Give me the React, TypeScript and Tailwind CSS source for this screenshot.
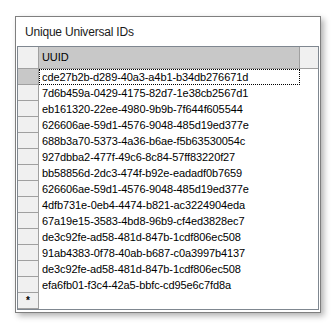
const uuids = [
  "cde27b2b-d289-40a3-a4b1-b34db276671d",
  "7d6b459a-0429-4175-82d7-1e38cb2567d1",
  "eb161320-22ee-4980-9b9b-7f644f605544",
  "626606ae-59d1-4576-9048-485d19ed377e",
  "688b3a70-5373-4a36-b6ae-f5b63530054c",
  "927dbba2-477f-49c6-8c84-57ff83220f27",
  "bb58856d-2dc3-474f-b92e-eadadf0b7659",
  "626606ae-59d1-4576-9048-485d19ed377e",
  "4dfb731e-0eb4-4474-b821-ac3224904eda",
  "67a19e15-3583-4bd8-96b9-cf4ed3828ec7",
  "de3c92fe-ad58-481d-847b-1cdf806ec508",
  "91ab4383-0f78-40ab-b687-c0a3997b4137",
  "de3c92fe-ad58-481d-847b-1cdf806ec508",
  "efa6fb01-f3c4-42a5-bbfc-cd95e6c7fd8a",
];

const App = () => {
  return (
    <div className="w-[336px] h-[330px] bg-white pl-[15px] pt-[16px] font-['Liberation_Sans',Arial,sans-serif] text-black">
      <div className="w-[306px] h-[297px] border border-[#7f7f7f] bg-white shadow-[3px_3px_6px_rgba(0,0,0,0.3)] flex flex-col">
        {/* title */}
        <div className="h-[29px] pl-[9px] flex items-center text-[12px] tracking-[-0.2px] text-[#1a1a1a]">
          Unique Universal IDs
        </div>

        {/* grid */}
        <div className="mx-px w-[302px] h-[264px] border border-[#7f8790] flex flex-col text-[11px] tracking-[-0.1px]">
          <div className="flex h-[22px] shrink-0 border-b border-[#a0a0a0]">
            <div className="w-[21px] bg-[#f0f0f0] border-r border-[#a0a0a0]" />
            <div className="w-[261px] bg-[#c8c8c8] border-r border-[#a0a0a0] pl-[3px] flex items-center">
              UUID
            </div>
            <div className="flex-1 bg-[#f0f0f0]" />
          </div>

          {uuids.map((id, i) => (
            <div key={i} className="flex h-[16px] shrink-0">
              <div
                className={
                  i === 0
                    ? "w-[21px] bg-[#c8c8c8] border-r border-b border-[#a0a0a0]"
                    : "w-[21px] bg-[#f0f0f0] border-r border-b border-[#a0a0a0]"
                }
              />
              {i === 0 ? (
                <div className="w-[261px] border border-dotted border-black pl-[2px] flex items-center leading-none">
                  {id}
                </div>
              ) : (
                <div className="flex-1 pl-[3px] flex items-center leading-none">{id}</div>
              )}
            </div>
          ))}

          <div className="flex h-[16px] shrink-0">
            <div className="w-[21px] bg-[#f0f0f0] border-r border-b border-[#a0a0a0] flex items-center justify-center text-[10px] font-bold leading-none">
              *
            </div>
            <div className="flex-1" />
          </div>
        </div>
      </div>
    </div>
  );
};

export default App;
